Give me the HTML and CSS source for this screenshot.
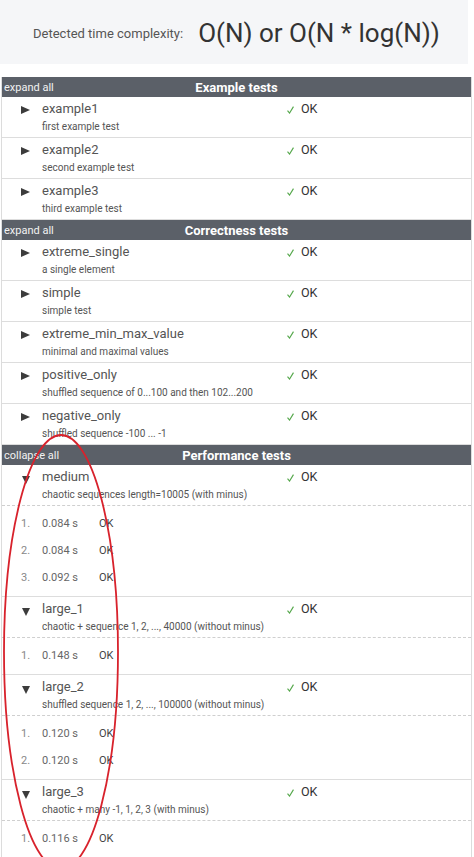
FILE: index.html
```html
<!DOCTYPE html>
<html lang="en">
<head>
<meta charset="utf-8">
<title>Test results</title>
<link rel="stylesheet" href="styles.css">
</head>
<body>
<div class="complexity">
  <span class="complexity-label">Detected time complexity:</span>
  <span class="complexity-value">O(N) or O(N * log(N))</span>
</div>

<div class="report">
  <section class="group">
    <div class="group-head"><span class="toggle-all">expand all</span><span class="group-title">Example tests</span><span></span></div>
    <div class="test">
      <div class="test-main"><span class="arrow"></span><span class="test-name">example1</span><span class="status"><svg class="check" viewBox="0 0 8 9"><path d="M0.6 5.2 L2.9 8 L7.4 0.6"/></svg>OK</span><span class="test-desc">first example test</span></div>
    </div>
    <div class="test">
      <div class="test-main"><span class="arrow"></span><span class="test-name">example2</span><span class="status"><svg class="check" viewBox="0 0 8 9"><path d="M0.6 5.2 L2.9 8 L7.4 0.6"/></svg>OK</span><span class="test-desc">second example test</span></div>
    </div>
    <div class="test">
      <div class="test-main"><span class="arrow"></span><span class="test-name">example3</span><span class="status"><svg class="check" viewBox="0 0 8 9"><path d="M0.6 5.2 L2.9 8 L7.4 0.6"/></svg>OK</span><span class="test-desc">third example test</span></div>
    </div>
  </section>

  <section class="group">
    <div class="group-head"><span class="toggle-all">expand all</span><span class="group-title">Correctness tests</span><span></span></div>
    <div class="test">
      <div class="test-main"><span class="arrow"></span><span class="test-name">extreme_single</span><span class="status"><svg class="check" viewBox="0 0 8 9"><path d="M0.6 5.2 L2.9 8 L7.4 0.6"/></svg>OK</span><span class="test-desc">a single element</span></div>
    </div>
    <div class="test">
      <div class="test-main"><span class="arrow"></span><span class="test-name">simple</span><span class="status"><svg class="check" viewBox="0 0 8 9"><path d="M0.6 5.2 L2.9 8 L7.4 0.6"/></svg>OK</span><span class="test-desc">simple test</span></div>
    </div>
    <div class="test">
      <div class="test-main"><span class="arrow"></span><span class="test-name">extreme_min_max_value</span><span class="status"><svg class="check" viewBox="0 0 8 9"><path d="M0.6 5.2 L2.9 8 L7.4 0.6"/></svg>OK</span><span class="test-desc">minimal and maximal values</span></div>
    </div>
    <div class="test">
      <div class="test-main"><span class="arrow"></span><span class="test-name">positive_only</span><span class="status"><svg class="check" viewBox="0 0 8 9"><path d="M0.6 5.2 L2.9 8 L7.4 0.6"/></svg>OK</span><span class="test-desc">shuffled sequence of 0...100 and then 102...200</span></div>
    </div>
    <div class="test">
      <div class="test-main"><span class="arrow"></span><span class="test-name">negative_only</span><span class="status"><svg class="check" viewBox="0 0 8 9"><path d="M0.6 5.2 L2.9 8 L7.4 0.6"/></svg>OK</span><span class="test-desc">shuffled sequence -100 ... -1</span></div>
    </div>
  </section>

  <section class="group">
    <div class="group-head"><span class="toggle-all">collapse all</span><span class="group-title">Performance tests</span><span></span></div>
    <div class="test">
      <div class="test-main"><span class="arrow open"></span><span class="test-name">medium</span><span class="status"><svg class="check" viewBox="0 0 8 9"><path d="M0.6 5.2 L2.9 8 L7.4 0.6"/></svg>OK</span><span class="test-desc">chaotic sequences length=10005 (with minus)</span></div>
      <ol class="runs">
        <li class="run"><span class="run-num">1.</span><span class="run-time">0.084 s</span><span class="run-status">OK</span></li>
        <li class="run"><span class="run-num">2.</span><span class="run-time">0.084 s</span><span class="run-status">OK</span></li>
        <li class="run"><span class="run-num">3.</span><span class="run-time">0.092 s</span><span class="run-status">OK</span></li>
      </ol>
    </div>
    <div class="test">
      <div class="test-main"><span class="arrow open"></span><span class="test-name">large_1</span><span class="status"><svg class="check" viewBox="0 0 8 9"><path d="M0.6 5.2 L2.9 8 L7.4 0.6"/></svg>OK</span><span class="test-desc">chaotic + sequence 1, 2, ..., 40000 (without minus)</span></div>
      <ol class="runs">
        <li class="run"><span class="run-num">1.</span><span class="run-time">0.148 s</span><span class="run-status">OK</span></li>
      </ol>
    </div>
    <div class="test">
      <div class="test-main"><span class="arrow open"></span><span class="test-name">large_2</span><span class="status"><svg class="check" viewBox="0 0 8 9"><path d="M0.6 5.2 L2.9 8 L7.4 0.6"/></svg>OK</span><span class="test-desc">shuffled sequence 1, 2, ..., 100000 (without minus)</span></div>
      <ol class="runs">
        <li class="run"><span class="run-num">1.</span><span class="run-time">0.120 s</span><span class="run-status">OK</span></li>
        <li class="run"><span class="run-num">2.</span><span class="run-time">0.120 s</span><span class="run-status">OK</span></li>
      </ol>
    </div>
    <div class="test">
      <div class="test-main"><span class="arrow open"></span><span class="test-name">large_3</span><span class="status"><svg class="check" viewBox="0 0 8 9"><path d="M0.6 5.2 L2.9 8 L7.4 0.6"/></svg>OK</span><span class="test-desc">chaotic + many -1, 1, 2, 3 (with minus)</span></div>
      <ol class="runs">
        <li class="run"><span class="run-num">1.</span><span class="run-time">0.116 s</span><span class="run-status">OK</span></li>
      </ol>
    </div>
  </section>
</div>

<svg class="annotation" width="474" height="857" viewBox="0 0 474 857" aria-hidden="true">
  <ellipse cx="61" cy="652" rx="57" ry="217"/>
</svg>
</body>
</html>
```

FILE: styles.css
```css
html, body {
  margin: 0;
  padding: 0;
  background: #ffffff;
}

body {
  position: relative;
  font-family: Roboto, "Liberation Sans", Arial, sans-serif;
  color: #555;
  overflow: hidden;
  height: 857px;
}

.complexity {
  width: 468px;
  height: 64px;
  box-sizing: border-box;
  background: #f5f6f8;
  display: flex;
  align-items: center;
  padding-left: 33px;
  padding-top: 2px;
  gap: 15px;
}

.complexity-label {
  font-size: 13px;
  color: #555;
}

.complexity-value {
  font-size: 26px;
  color: #333;
}

.report {
  margin: 13px 2px 0 1px;
  border-left: 1px solid #dcdcdc;
  border-right: 1px solid #dcdcdc;
}

.group-head {
  display: grid;
  grid-template-columns: 1fr auto 1fr;
  align-items: center;
  height: 20px;
  background: #5b6068;
  color: #fff;
}

.toggle-all {
  font-size: 11px;
  padding-left: 2px;
  color: #f2f2f2;
}

.group-title {
  font-size: 13px;
  font-weight: 700;
}

.test {
  border-bottom: 1px solid #dddddd;
}

.test-main {
  display: grid;
  grid-template-columns: 40px 245px 1fr;
  grid-template-rows: 16px 13px;
  row-gap: 3px;
  height: 40px;
  box-sizing: border-box;
  padding-top: 4px;
}

.arrow {
  grid-row: 1;
  grid-column: 1;
  width: 0;
  height: 0;
  margin: 5px 0 0 19px;
  border-left: 9px solid #3c3c3c;
  border-top: 4.5px solid transparent;
  border-bottom: 4.5px solid transparent;
}

.arrow.open {
  margin: 7px 0 0 20px;
  border-top: 8px solid #3c3c3c;
  border-left: 4.5px solid transparent;
  border-right: 4.5px solid transparent;
  border-bottom: 0;
}

.test-name {
  grid-row: 1;
  grid-column: 2;
  font-size: 13px;
  line-height: 16px;
  color: #555;
  white-space: nowrap;
}

.status {
  grid-row: 1;
  grid-column: 3;
  font-size: 12.5px;
  line-height: 16px;
  color: #333;
  font-weight: 400;
  display: flex;
  align-items: center;
  gap: 7px;
}

.check {
  width: 7px;
  height: 8px;
  margin-top: 2px;
  fill: none;
  stroke: #56a84c;
  stroke-width: 1.3;
}

.test-desc {
  grid-row: 2;
  grid-column: 2 / span 2;
  font-size: 10px;
  line-height: 13px;
  color: #555;
  white-space: nowrap;
}

.runs {
  list-style: none;
  margin: 0;
  padding: 4px 0 5px;
  border-top: 1px dashed #cfcfcf;
}

.run {
  display: grid;
  grid-template-columns: 40px 57px auto;
  align-items: center;
  height: 27px;
  font-size: 11px;
}

.run-num {
  padding-left: 19px;
  color: #888;
}

.run-time {
  color: #666;
}

.run-status {
  color: #444;
}

.annotation {
  position: absolute;
  left: 0;
  top: 0;
  pointer-events: none;
}

.annotation ellipse {
  fill: none;
  stroke: #d8222c;
  stroke-width: 1.8;
}
```
